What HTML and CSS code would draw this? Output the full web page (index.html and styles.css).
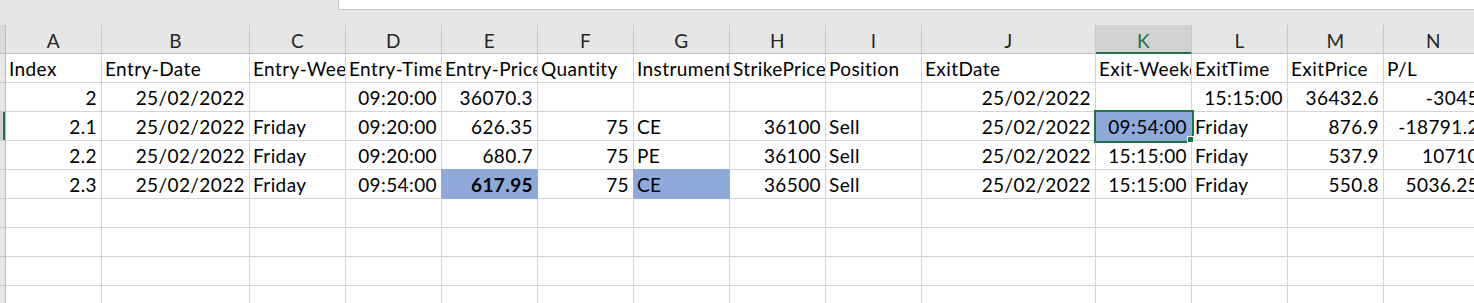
FILE: index.html
```html
<!DOCTYPE html>
<html lang="en">
<head>
<meta charset="utf-8">
<title>Sheet</title>
<link rel="stylesheet" href="styles.css">
</head>
<body>
<div class="app">
  <div class="topbar">
    <div class="topbar-gap"></div>
    <div class="formula"></div>
  </div>
  <div class="sheet">
    <!-- column header row -->
    <div class="corner"></div>
    <div class="h">A</div><div class="h">B</div><div class="h">C</div><div class="h">D</div><div class="h">E</div>
    <div class="h">F</div><div class="h">G</div><div class="h">H</div><div class="h">I</div><div class="h">J</div>
    <div class="h h-sel">K</div><div class="h">L</div><div class="h">M</div><div class="h">N</div>

    <!-- row 1 -->
    <div class="rh"></div>
    <div class="c">Index</div><div class="c">Entry-Date</div><div class="c">Entry-Weekday</div><div class="c">Entry-Time</div>
    <div class="c">Entry-Price</div><div class="c">Quantity</div><div class="c">Instrument</div><div class="c">StrikePrice</div>
    <div class="c">Position</div><div class="c">ExitDate</div><div class="c">Exit-Weekday</div><div class="c">ExitTime</div>
    <div class="c">ExitPrice</div><div class="c">P/L</div>

    <!-- row 2 -->
    <div class="rh"></div>
    <div class="c r">2</div><div class="c r">25/02/2022</div><div class="c"></div><div class="c r">09:20:00</div>
    <div class="c r">36070.3</div><div class="c"></div><div class="c"></div><div class="c"></div>
    <div class="c"></div><div class="c r">25/02/2022</div><div class="c"></div><div class="c r">15:15:00</div>
    <div class="c r">36432.6</div><div class="c r">-3045</div>

    <!-- row 3 -->
    <div class="rh rh-sel"></div>
    <div class="c r">2.1</div><div class="c r">25/02/2022</div><div class="c">Friday</div><div class="c r">09:20:00</div>
    <div class="c r">626.35</div><div class="c r">75</div><div class="c">CE</div><div class="c r">36100</div>
    <div class="c">Sell</div><div class="c r">25/02/2022</div><div class="c r fill sel">09:54:00<span class="handle"></span></div><div class="c">Friday</div>
    <div class="c r">876.9</div><div class="c r">-18791.2</div>

    <!-- row 4 -->
    <div class="rh"></div>
    <div class="c r">2.2</div><div class="c r">25/02/2022</div><div class="c">Friday</div><div class="c r">09:20:00</div>
    <div class="c r">680.7</div><div class="c r">75</div><div class="c">PE</div><div class="c r">36100</div>
    <div class="c">Sell</div><div class="c r">25/02/2022</div><div class="c r">15:15:00</div><div class="c">Friday</div>
    <div class="c r">537.9</div><div class="c r">10710</div>

    <!-- row 5 -->
    <div class="rh"></div>
    <div class="c r">2.3</div><div class="c r">25/02/2022</div><div class="c">Friday</div><div class="c r">09:54:00</div>
    <div class="c r fill b">617.95</div><div class="c r">75</div><div class="c fill">CE</div><div class="c r">36500</div>
    <div class="c">Sell</div><div class="c r">25/02/2022</div><div class="c r">15:15:00</div><div class="c">Friday</div>
    <div class="c r">550.8</div><div class="c r">5036.25</div>

    <!-- empty rows -->
    <div class="rh"></div><div class="c"></div><div class="c"></div><div class="c"></div><div class="c"></div><div class="c"></div><div class="c"></div><div class="c"></div><div class="c"></div><div class="c"></div><div class="c"></div><div class="c"></div><div class="c"></div><div class="c"></div><div class="c"></div>
    <div class="rh"></div><div class="c"></div><div class="c"></div><div class="c"></div><div class="c"></div><div class="c"></div><div class="c"></div><div class="c"></div><div class="c"></div><div class="c"></div><div class="c"></div><div class="c"></div><div class="c"></div><div class="c"></div><div class="c"></div>
    <div class="rh"></div><div class="c"></div><div class="c"></div><div class="c"></div><div class="c"></div><div class="c"></div><div class="c"></div><div class="c"></div><div class="c"></div><div class="c"></div><div class="c"></div><div class="c"></div><div class="c"></div><div class="c"></div><div class="c"></div>
    <div class="rh"></div><div class="c"></div><div class="c"></div><div class="c"></div><div class="c"></div><div class="c"></div><div class="c"></div><div class="c"></div><div class="c"></div><div class="c"></div><div class="c"></div><div class="c"></div><div class="c"></div><div class="c"></div><div class="c"></div>
  </div>
</div>
</body>
</html>
```

FILE: styles.css
```css
html, body {
  margin: 0;
  padding: 0;
  overflow: hidden;
  background: #e6e6e6;
}

.app {
  width: 1474px;
  height: 303px;
  overflow: hidden;
  font-family: Lato, "Open Sans", "Liberation Sans", sans-serif;
  font-size: 19px;
  letter-spacing: 0.4px;
  color: #000;
}

.topbar {
  display: flex;
  height: 25px;
  background: #e6e6e6;
}

.topbar-gap {
  width: 338px;
  flex: none;
}

.formula {
  flex: 1;
  height: 9px;
  background: #fff;
  border-left: 1px solid #c6c6c6;
  border-bottom: 1px solid #c6c6c6;
}

.sheet {
  display: grid;
  grid-template-columns: 6px 96px 148px 96px 96px 96px 96px 96px 96px 96px 174px 96px 96px 96px 100px;
  grid-auto-rows: 29px;
  width: 1484px;
  background: #fff;
}

.corner {
  background: #dadada;
  border-right: 1px solid #bdbdbd;
  border-bottom: 1px solid #bdbdbd;
}

.h {
  background: #e6e6e6;
  border-right: 1px solid #c8c8c8;
  border-bottom: 1px solid #bdbdbd;
  text-align: center;
  line-height: 22px;
  padding-top: 5px;
  color: #262626;
  overflow: hidden;
  white-space: nowrap;
}

.h-sel {
  background: #d2d2d2;
  color: #217346;
  border-bottom-color: #217346;
  box-shadow: inset 0 -1px 0 #217346;
}

.rh {
  background: #e6e6e6;
  border-right: 1px solid #bdbdbd;
  border-bottom: 1px solid #c8c8c8;
}

.rh-sel {
  background: #d2d2d2;
  box-shadow: inset -2px 0 0 #217346;
}

.c {
  box-sizing: border-box;
  border-right: 1px solid #d4d4d4;
  border-bottom: 1px solid #d4d4d4;
  padding: 4px 4px 0 3px;
  line-height: 22px;
  white-space: nowrap;
  overflow: hidden;
  background: #fff;
}

.r {
  text-align: right;
}

.b {
  font-weight: 700;
}

.fill {
  background: #8eaadb;
  border-right-color: #8eaadb;
  border-bottom-color: #8eaadb;
  box-shadow: -1px -1px 0 #8eaadb;
}

.sel {
  position: relative;
  z-index: 1;
  overflow: visible;
  outline: 2px solid #217346;
}

.handle {
  position: absolute;
  right: -3px;
  bottom: -3px;
  width: 5px;
  height: 5px;
  background: #217346;
  border: 1px solid #fff;
}
```
